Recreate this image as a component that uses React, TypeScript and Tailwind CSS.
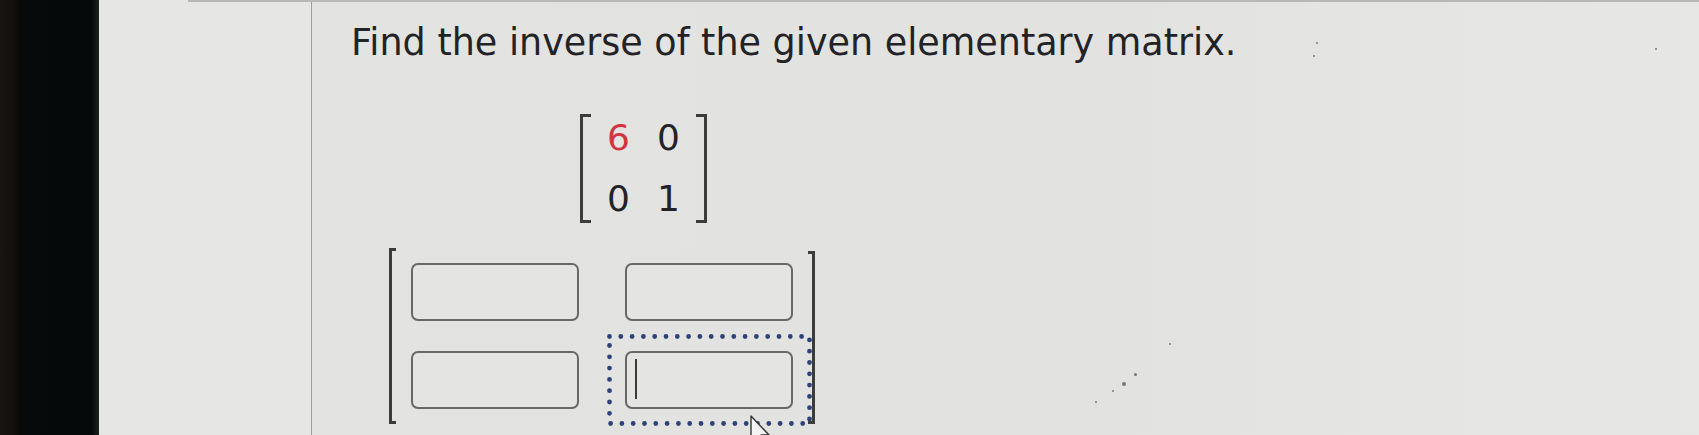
import React from 'react';

const font = { fontFamily: '"DejaVu Sans", Verdana, sans-serif' };

function Bracket({ side, className }: { side: 'left' | 'right'; className: string }) {
  return (
    <div
      className={
        (side === 'left' ? 'border-l-[3px] ' : 'border-r-[3px] ') +
        'border-y-[3px] border-[#3c3c3c] ' +
        className
      }
    />
  );
}

function AnswerBox({ focused }: { focused?: boolean }) {
  return (
    <div className="relative w-[168px] h-[58px] rounded-[7px] border-2 border-[#686868] bg-[#e4e4e2]">
      {focused && (
        <>
          {/* caret */}
          <div className="absolute left-[8px] top-[6px] w-[2px] h-[40px] bg-[#3a3a3a]" />
          {/* dotted focus ring */}
          <svg
            className="absolute left-[-20px] top-[-19px] pointer-events-none"
            width="205"
            height="92"
            viewBox="0 0 205 92"
          >
            <rect
              x="2.5"
              y="2.5"
              width="200"
              height="87"
              fill="none"
              stroke="#2f4278"
              strokeWidth="4.8"
              strokeLinecap="round"
              strokeDasharray="0 11.3"
            />
          </svg>
          {/* mouse pointer */}
          <svg
            className="absolute left-[122px] top-[61px] overflow-visible"
            width="24"
            height="34"
            viewBox="0 0 24 34"
          >
            <path
              d="M2 2 L2 28 L8 22.5 L12 32 L16 30.5 L12 21 L20 21 Z"
              fill="#f4f4f4"
              stroke="#333"
              strokeWidth="1.4"
              strokeLinejoin="round"
            />
          </svg>
        </>
      )}
    </div>
  );
}

const specks: [number, number, number][] = [
  [1122, 382, 4],
  [1134, 373, 3],
  [1112, 390, 2],
  [1095, 401, 2],
  [1169, 343, 2],
  [1316, 42, 2],
  [1313, 55, 2],
  [1655, 48, 2],
];

export default function App() {
  return (
    <div
      className="relative w-[1699px] h-[435px] overflow-hidden flex bg-[#e3e3e1] text-[#232327]"
      style={font}
    >
      {/* dark bezel */}
      <div className="w-[99px] shrink-0 bg-[linear-gradient(to_right,#1a1511_0px,#130f0c_14px,#070a0a_20px,#060909_92px,#1d2220_99px)]" />

      <div className="w-[89px] shrink-0 bg-[#e6e6e4]" />

      <div className="flex-1 flex border-t-2 border-[#b8b8b6] bg-[linear-gradient(to_right,#e3e3e1,#e2e2e0_60%,#e7e7e6)]">
        <div className="w-[124px] shrink-0 border-r-[1.5px] border-[#9d9d9b] bg-[#e6e6e4]" />

        <div className="flex-1 pl-[39px] pt-[23px]">
          <p className="text-[36.5px] leading-none whitespace-nowrap">
            Find the inverse of the given elementary matrix.
          </p>

          {/* given matrix */}
          <div className="flex ml-[229px] mt-[52px]">
            <Bracket side="left" className="w-[11px]" />
            <div className="grid grid-cols-[23px_23px] gap-x-[27px] gap-y-[13px] px-[16px] text-[36px] leading-[48px] text-center">
              <span className="text-[#d23440]">6</span>
              <span>0</span>
              <span>0</span>
              <span>1</span>
            </div>
            <Bracket side="right" className="w-[11px]" />
          </div>

          {/* answer matrix */}
          <div className="flex ml-[38px] mt-[25px]">
            <Bracket side="left" className="w-[7px]" />
            <div className="grid grid-cols-[168px_168px] gap-x-[46px] gap-y-[30px] p-[15px]">
              <AnswerBox />
              <AnswerBox />
              <AnswerBox />
              <AnswerBox focused />
            </div>
            <Bracket side="right" className="w-[7px] mt-[3px]" />
          </div>
        </div>
      </div>

      {specks.map(([x, y, s], i) => (
        <div
          key={i}
          className="absolute rounded-full bg-[#4a4a4a] opacity-70"
          style={{ left: x, top: y, width: s, height: s }}
        />
      ))}
    </div>
  );
}
